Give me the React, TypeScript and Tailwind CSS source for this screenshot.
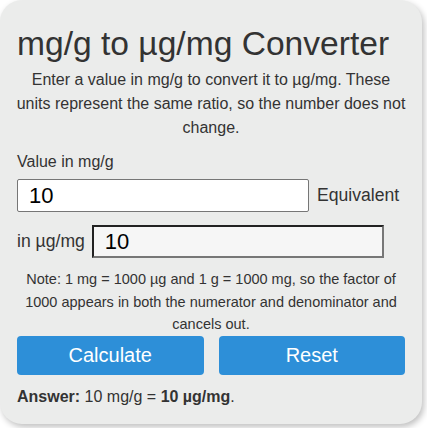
import { useState } from "react";

const App = () => {
  const [value, setValue] = useState("10");
  const n = parseFloat(value);
  const result = isNaN(n) ? "" : String(n);

  return (
    <div className="w-[427px] h-[428px] bg-white" style={{ fontFamily: '"Liberation Sans", Arial, sans-serif' }}>
      <div className="w-[422px] h-[424px] rounded-[22px] bg-[#ebeceb] shadow-[2px_3px_6px_rgba(0,0,0,0.25)] px-[17px] pt-[24px] text-[#333]">
        <h1 className="text-[33.6px] leading-[40px] text-[#333] whitespace-nowrap">mg/g to µg/mg Converter</h1>
        <p className="text-center text-[16px] leading-[24px] mt-[4px] -mx-[4px]">
          Enter a value in mg/g to convert it to µg/mg. These units represent the same ratio, so the number does not change.
        </p>
        <label className="block text-[16px] leading-[24px] mt-[10px]">Value in mg/g</label>
        <div className="flex items-center mt-[5px]">
          <input
            className="w-[292px] h-[33px] bg-white border border-[#767676] rounded-[2px] px-[11px] text-[22px] text-black outline-none"
            value={value}
            onChange={(e) => setValue(e.target.value)}
          />
          <span className="ml-[8px] text-[17.6px]">Equivalent</span>
        </div>
        <div className="flex items-center mt-[13px]">
          <span className="text-[17.6px] mr-[7px]">in µg/mg</span>
          <input
            readOnly
            className="w-[292px] h-[33px] bg-[#f6f6f6] border-2 border-t-[#222] border-l-[#222] border-r-[#777] border-b-[#777] px-[11px] text-[22px] text-black outline-none"
            value={result}
          />
        </div>
        <p className="text-center text-[14.5px] leading-[22.5px] mt-[10px] -mx-[4px]">
          Note: 1 mg = 1000 µg and 1 g = 1000 mg, so the factor of 1000 appears in both the numerator and denominator and cancels out.
        </p>
        <div className="flex gap-[15px] mt-0">
          <button className="flex-1 h-[39px] rounded-[4px] bg-[#2d8fd8] text-white text-[20px]">Calculate</button>
          <button className="flex-1 h-[39px] rounded-[4px] bg-[#2d8fd8] text-white text-[20px]" onClick={() => setValue("")}>Reset</button>
        </div>
        <p className="text-[16px] leading-[24px] mt-[10px]">
          <b>Answer:</b> {value || 0} mg/g = <b>{result || 0} µg/mg</b>.
        </p>
      </div>
    </div>
  );
};

export default App;
